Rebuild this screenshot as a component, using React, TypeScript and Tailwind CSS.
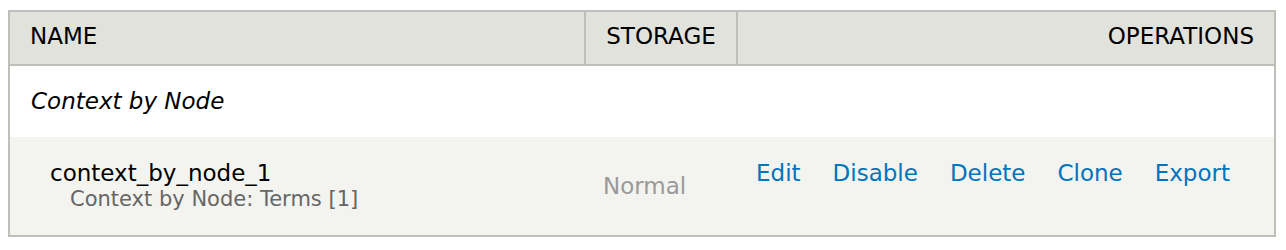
import React from 'react';

const links = ['Edit', 'Disable', 'Delete', 'Clone', 'Export'];

const App: React.FC = () => {
    return (
        <div className="w-[1286px] h-[250px] bg-white pt-[10px] pl-[8px] font-['DejaVu_Sans',sans-serif]">
            <div className="w-[1268px] border-2 border-[#bfbfba]">
                {/* header */}
                <div className="flex h-[54px] bg-[#e1e2dc] border-b-2 border-[#bfbfba] text-[23px] text-black">
                    <div className="w-[574px] flex items-center pl-[20px] pb-[3px]">NAME</div>
                    <div className="w-[152px] border-l-2 border-[#bfbfba] flex items-center justify-center pb-[3px]">STORAGE</div>
                    <div className="flex-1 border-l-2 border-[#bfbfba] flex items-center justify-end pr-[20px] pb-[3px]">OPERATIONS</div>
                </div>

                {/* group row */}
                <div className="h-[71px] bg-white flex items-center pl-[21px] text-[23px] italic text-black">
                    Context by Node
                </div>

                {/* data row */}
                <div className="flex h-[98px] bg-[#f3f3ef]">
                    <div className="w-[574px] pt-[23px] pl-[40px]">
                        <div className="text-[23px] leading-[27px] text-black">context_by_node_1</div>
                        <div className="text-[21px] leading-[22px] text-[#666] pl-[20px] mt-[1px]">Context by Node: Terms [1]</div>
                    </div>
                    <div className="w-[152px] flex items-center pl-[19px] text-[23px] text-[#999]">Normal</div>
                    <div className="flex-1 pt-[23px] pl-[20px] flex gap-[32px] text-[23px] leading-[27px] text-[#0074bd]">
                        {links.map(l => (
                            <a key={l} href="#" className="hover:underline">{l}</a>
                        ))}
                    </div>
                </div>
            </div>
        </div>
    );
};

export default App;
